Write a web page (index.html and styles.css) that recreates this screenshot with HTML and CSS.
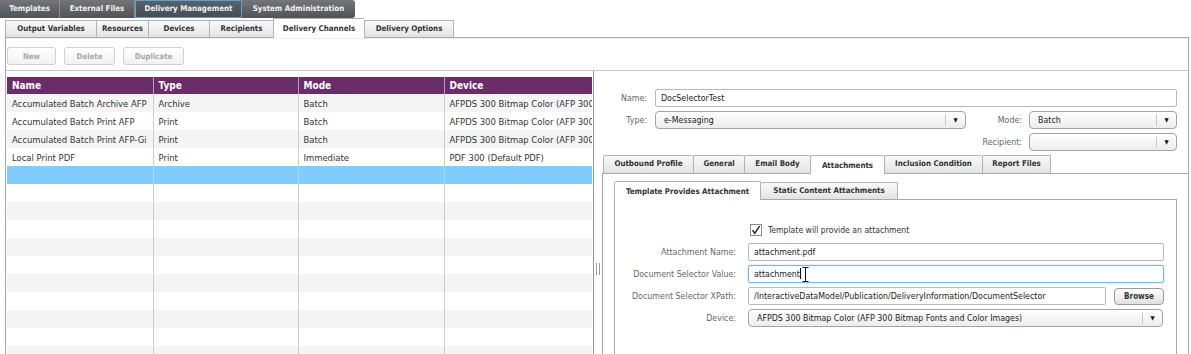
FILE: index.html
```html
<!DOCTYPE html>
<html>
<head>
<meta charset="utf-8">
<title>Delivery Channels</title>
<link rel="stylesheet" href="styles.css">
</head>
<body>
<div class="topnav">
  <div class="navtab">Templates</div>
  <div class="navtab">External Files</div>
  <div class="navtab active">Delivery Management</div>
  <div class="navtab">System Administration</div>
</div>
<div class="subtabs">
  <div class="stab">Output Variables</div>
  <div class="stab">Resources</div>
  <div class="stab">Devices</div>
  <div class="stab">Recipients</div>
  <div class="stab active">Delivery Channels</div>
  <div class="stab">Delivery Options</div>
</div>
<div class="workspace">
  <div class="toolbar">
    <button class="tbtn b-new">New</button>
    <button class="tbtn b-del">Delete</button>
    <button class="tbtn b-dup">Duplicate</button>
  </div>
  <div class="body">
    <div class="leftpane">
      <table class="grid">
        <colgroup><col class="c1"><col class="c2"><col class="c3"><col class="c4"></colgroup>
        <thead><tr><th>Name</th><th>Type</th><th>Mode</th><th>Device</th></tr></thead>
        <tbody>
          <tr><td>Accumulated Batch Archive AFP</td><td>Archive</td><td>Batch</td><td>AFPDS 300 Bitmap Color (AFP 300</td></tr>
          <tr><td>Accumulated Batch Print AFP</td><td>Print</td><td>Batch</td><td>AFPDS 300 Bitmap Color (AFP 300</td></tr>
          <tr><td>Accumulated Batch Print AFP-Gi</td><td>Print</td><td>Batch</td><td>AFPDS 300 Bitmap Color (AFP 300</td></tr>
          <tr><td>Local Print PDF</td><td>Print</td><td>Immediate</td><td>PDF 300 (Default PDF)</td></tr>
          <tr class="sel"><td></td><td></td><td></td><td></td></tr>
          <tr><td></td><td></td><td></td><td></td></tr>
          <tr><td></td><td></td><td></td><td></td></tr>
          <tr><td></td><td></td><td></td><td></td></tr>
          <tr><td></td><td></td><td></td><td></td></tr>
          <tr><td></td><td></td><td></td><td></td></tr>
          <tr><td></td><td></td><td></td><td></td></tr>
          <tr><td></td><td></td><td></td><td></td></tr>
          <tr><td></td><td></td><td></td><td></td></tr>
          <tr><td></td><td></td><td></td><td></td></tr>
          <tr><td></td><td></td><td></td><td></td></tr>
        </tbody>
      </table>
    </div>
    <div class="splitter"><div class="grip"></div></div>
    <div class="rightpane">
      <div class="form">
        <div class="frow">
          <div class="flabel">Name:</div>
          <div class="input name-in">DocSelectorTest</div>
        </div>
        <div class="frow">
          <div class="flabel">Type:</div>
          <div class="select type-sel"><span class="sval">e-Messaging</span><span class="sarrow">&#9660;</span></div>
          <div class="rgroup">
            <div class="rlabel">Mode:</div>
            <div class="select small-sel"><span class="sval">Batch</span><span class="sarrow">&#9660;</span></div>
          </div>
        </div>
        <div class="frow">
          <div class="rgroup">
            <div class="rlabel">Recipient:</div>
            <div class="select small-sel"><span class="sval"></span><span class="sarrow">&#9660;</span></div>
          </div>
        </div>
      </div>
      <div class="ptabs">
        <div class="ptab t1">Outbound Profile</div>
        <div class="ptab t2">General</div>
        <div class="ptab t3">Email Body</div>
        <div class="ptab t4 active">Attachments</div>
        <div class="ptab t5">Inclusion Condition</div>
        <div class="ptab t6">Report Files</div>
      </div>
      <div class="ppanel">
        <div class="itabs">
          <div class="itab active">Template Provides Attachment</div>
          <div class="itab">Static Content Attachments</div>
        </div>
        <div class="ipanel">
          <div class="checkrow">
            <span class="cbox"><svg width="10" height="10" viewBox="0 0 10 10"><path d="M1.5 5.2 L3.8 8.2 L8.6 1.2" fill="none" stroke="#222" stroke-width="1.4"/></svg></span>
            <span class="clabel">Template will provide an attachment</span>
          </div>
          <div class="igrid">
            <div class="ilabel">Attachment Name:</div>
            <div class="input wide">attachment.pdf</div>
            <div class="ilabel">Document Selector Value:</div>
            <div class="input wide focus">attachment<span class="caret"></span><svg class="ibeam" width="7" height="15" viewBox="0 0 7 15"><path d="M0.5 0.5 H6.5 M3.5 0.5 V14.5 M0.5 14.5 H6.5" fill="none" stroke="#111" stroke-width="1"/></svg></div>
            <div class="ilabel">Document Selector XPath:</div>
            <div class="xrow">
              <div class="input xpath">/InteractiveDataModel/Publication/DeliveryInformation/DocumentSelector</div>
              <button class="browse">Browse</button>
            </div>
            <div class="ilabel">Device:</div>
            <div class="select wide-sel"><span class="sval">AFPDS 300 Bitmap Color (AFP 300 Bitmap Fonts and Color Images)</span><span class="sarrow">&#9660;</span></div>
          </div>
        </div>
      </div>
    </div>
  </div>
</div>
</body>
</html>
```

FILE: styles.css
```css
* { box-sizing: border-box; }
html, body { margin: 0; padding: 0; }
body {
  width: 1191px;
  height: 354px;
  overflow: hidden;
  background: #fff;
  color: #333;
  font-family: "DejaVu Sans Condensed", "Liberation Sans", Arial, sans-serif;
  font-size: 9px;
}

/* top navigation */
.topnav { display: flex; height: 18px; }
.navtab {
  height: 18px;
  line-height: 17px;
  text-align: center;
  font-weight: bold;
  font-size: 7.9px;
  color: #f2f2f2;
  background: linear-gradient(#737578, #505357);
  border-right: 1px solid #8b8d90;
  white-space: nowrap;
}
.navtab:nth-child(1) { width: 60px; }
.navtab:nth-child(2) { width: 75px; }
.navtab:nth-child(3) { width: 107px; }
.navtab:nth-child(4) { width: 113px; border-right: none; border-radius: 0 3px 3px 0; }
.navtab.active {
  background: linear-gradient(#56626c, #434e57);
  border: 1px solid #6a9cc4;
  line-height: 15px;
}

/* sub tabs */
.subtabs {
  display: flex;
  align-items: flex-end;
  margin-left: 5px;
  margin-top: 1px;
  width: 1184px;
  height: 19px;
  border-bottom: 1px solid #a9a9a9;
}
.stab {
  height: 17px;
  line-height: 15px;
  text-align: center;
  font-weight: bold;
  font-size: 7.9px;
  color: #333;
  background: linear-gradient(#fafafa, #e3e3e3);
  border: 1px solid #b3b3b3;
  border-bottom: none;
  border-right: none;
  white-space: nowrap;
}
.stab:nth-child(1) { width: 91px; }
.stab:nth-child(2) { width: 52px; }
.stab:nth-child(3) { width: 61px; }
.stab:nth-child(4) { width: 64px; }
.stab:nth-child(5) { width: 91px; }
.stab:nth-child(6) { width: 90px; border-right: 1px solid #b3b3b3; }
.stab.active {
  line-height: 19px;
  background: #fff;
  margin-bottom: -1px;
  height: 20px;
}

/* workspace */
.workspace {
  margin-left: 5px;
  width: 1184px;
  height: 316px;
  border-left: 1px solid #a9a9a9;
  border-right: 1px solid #a9a9a9;
  display: flex;
  flex-direction: column;
}
.toolbar {
  height: 33px;
  flex: none;
  border-bottom: 1px solid #c8c8c8;
  border-top: 1px solid #f0f0f0;
  display: flex;
  align-items: flex-start;
  padding-top: 8px;
  padding-left: 1px;
}
.tbtn {
  height: 18px;
  padding: 0;
  margin: 0 8px 0 0;
  font-family: inherit;
  font-size: 7.8px;
  font-weight: bold;
  color: #a8a8a8;
  background: linear-gradient(#ffffff, #f1f1f1);
  border: 1px solid #cfcfcf;
  border-radius: 3px;
}
.b-new { width: 49px; }
.b-del { width: 51px; }
.b-dup { width: 61px; }

.body { flex: 1; display: flex; min-height: 0; }

/* grid */
.leftpane {
  width: 588px;
  flex: none;
  padding: 6px 0 0 1px;
  border-right: 1px solid #9a9a9a;
  overflow: hidden;
}
.grid {
  width: 585px;
  table-layout: fixed;
  border-collapse: collapse;
}
.grid col.c1 { width: 146px; }
.grid col.c2 { width: 145px; }
.grid col.c3 { width: 146px; }
.grid col.c4 { width: 148px; }
.grid th {
  height: 17px;
  padding: 0 5px;
  text-align: left;
  font-size: 10px;
  font-weight: bold;
  color: #fff;
  background: #6b2c6a;
  border-left: 1px solid #b79ab6;
  white-space: nowrap;
  overflow: hidden;
}
.grid th:first-child { border-left: none; }
.grid td {
  height: 18px;
  padding: 0 1px 0 5px;
  font-size: 9.4px;
  color: #333;
  white-space: nowrap;
  overflow: hidden;
  border-left: 1px solid #cdcdcd;
}
.grid td:first-child { border-left: none; }
.grid td:last-child { padding-right: 5px; }
.grid tbody tr { background: #fff; }
.grid tbody tr:nth-child(odd) { background: #f4f4f4; }
.grid tbody tr.sel { background: #80ccff; }
.grid tbody tr.sel td { border-left-color: #a9dcff; }

/* splitter */
.splitter {
  width: 8px;
  flex: none;
  display: flex;
  justify-content: center;
}
.grip {
  margin-top: 192px;
  width: 4px;
  height: 12px;
  border-left: 1px solid #999;
  border-right: 1px solid #999;
}

/* right pane */
.rightpane {
  width: 586px;
  flex: none;
  display: flex;
  flex-direction: column;
}
.form {
  padding: 18px 11px 0 0;
  display: flex;
  flex-direction: column;
  gap: 4px;
}
.frow { display: flex; align-items: center; height: 18px; }
.flabel {
  width: 45px;
  margin-right: 8px;
  text-align: right;
  color: #666;
  font-size: 8.8px;
  line-height: 11px;
}
.rgroup { margin-left: auto; display: flex; align-items: center; }
.rlabel {
  text-align: right;
  color: #666;
  font-size: 8.8px;
  line-height: 11px;
  margin-right: 7px;
}
.input {
  height: 18px;
  line-height: 16px;
  padding: 0 5px;
  border: 1px solid #b9b9b9;
  border-radius: 2px;
  background: #fff;
  color: #222;
  font-size: 8.8px;
  white-space: nowrap;
  overflow: hidden;
  position: relative;
}
.name-in { width: 522px; }
.select {
  height: 18px;
  display: flex;
  align-items: center;
  border: 1px solid #a3a3a3;
  border-radius: 4px;
  background: linear-gradient(#ffffff, #ececec);
  color: #222;
  font-size: 8.8px;
}
.sval { flex: 1; padding-left: 8px; white-space: nowrap; overflow: hidden; line-height: 11px; }
.sarrow {
  width: 20px;
  height: 12px;
  line-height: 12px;
  text-align: center;
  font-size: 6px;
  color: #111;
  border-left: 1px solid #c9c9c9;
}
.type-sel { width: 311px; }
.small-sel { width: 148px; }

/* panel tabs */
.ptabs {
  display: flex;
  margin-top: 4px;
  margin-left: 1px;
  height: 18px;
  align-items: flex-end;
}
.ptab {
  height: 18px;
  line-height: 16px;
  text-align: center;
  font-weight: bold;
  font-size: 7.9px;
  color: #333;
  background: linear-gradient(#fafafa, #e3e3e3);
  border: 1px solid #b3b3b3;
  border-right: none;
  border-bottom: none;
  border-radius: 2px 2px 0 0;
  white-space: nowrap;
}
.ptab.t1 { width: 90px; }
.ptab.t2 { width: 51px; }
.ptab.t3 { width: 66px; }
.ptab.t4 { width: 74px; }
.ptab.t5 { width: 98px; }
.ptab.t6 { width: 69px; border-right: 1px solid #b3b3b3; }
.ptab.active {
  background: #fff;
  height: 19px;
  margin-bottom: -1px;
  line-height: 19px;
  position: relative;
}
.ppanel {
  flex: 1;
  border-left: 1px solid #a9a9a9;
  border-top: 1px solid #a9a9a9;
  padding: 7px 11px 0 11px;
  display: flex;
  flex-direction: column;
}
.itabs { display: flex; height: 18px; align-items: flex-end; }
.itab {
  height: 17px;
  line-height: 15px;
  padding: 0;
  text-align: center;
  font-weight: bold;
  font-size: 7.9px;
  color: #333;
  background: linear-gradient(#fafafa, #e3e3e3);
  border: 1px solid #b3b3b3;
  border-bottom: none;
  border-radius: 2px 2px 0 0;
  white-space: nowrap;
}
.itab:nth-child(1) { width: 147px; }
.itab:nth-child(2) { width: 137px; border-left: none; }
.itab.active {
  height: 19px;
  line-height: 19px;
  background: #fff;
  margin-bottom: -1px;
  position: relative;
}
.ipanel {
  flex: 1;
  border: 1px solid #a9a9a9;
  border-bottom: none;
  padding: 24px 12px 0 0;
}
.checkrow {
  display: flex;
  align-items: center;
  height: 12px;
  margin-left: 135px;
  margin-bottom: 7px;
}
.cbox {
  width: 12px;
  height: 12px;
  border: 1px solid #8a8a8a;
  background: #fff;
  display: flex;
  align-items: center;
  justify-content: center;
  margin-right: 6px;
}
.clabel { font-size: 8.6px; color: #333; }
.igrid {
  display: grid;
  grid-template-columns: 121px 416px;
  column-gap: 12px;
  row-gap: 4px;
  align-items: center;
}
.ilabel { text-align: right; color: #666; font-size: 8.8px; white-space: nowrap; line-height: 11px; }
.wide { width: 416px; }
.focus {
  border: 1px solid #7fb6e0;
  box-shadow: 0 0 2px #9fd0f2;
}
.caret {
  display: inline-block;
  width: 1px;
  height: 11px;
  background: #111;
  vertical-align: -2px;
}
.ibeam { position: absolute; left: 53px; top: 1px; }
.xrow { display: flex; align-items: center; gap: 8px; }
.xpath { width: 358px; }
.browse {
  width: 50px;
  height: 17px;
  padding: 0;
  font-family: inherit;
  font-size: 8px;
  font-weight: bold;
  color: #333;
  background: linear-gradient(#ffffff, #e0e0e0);
  border: 1px solid #9b9b9b;
  border-radius: 4px;
}
.wide-sel { width: 415px; }
```
